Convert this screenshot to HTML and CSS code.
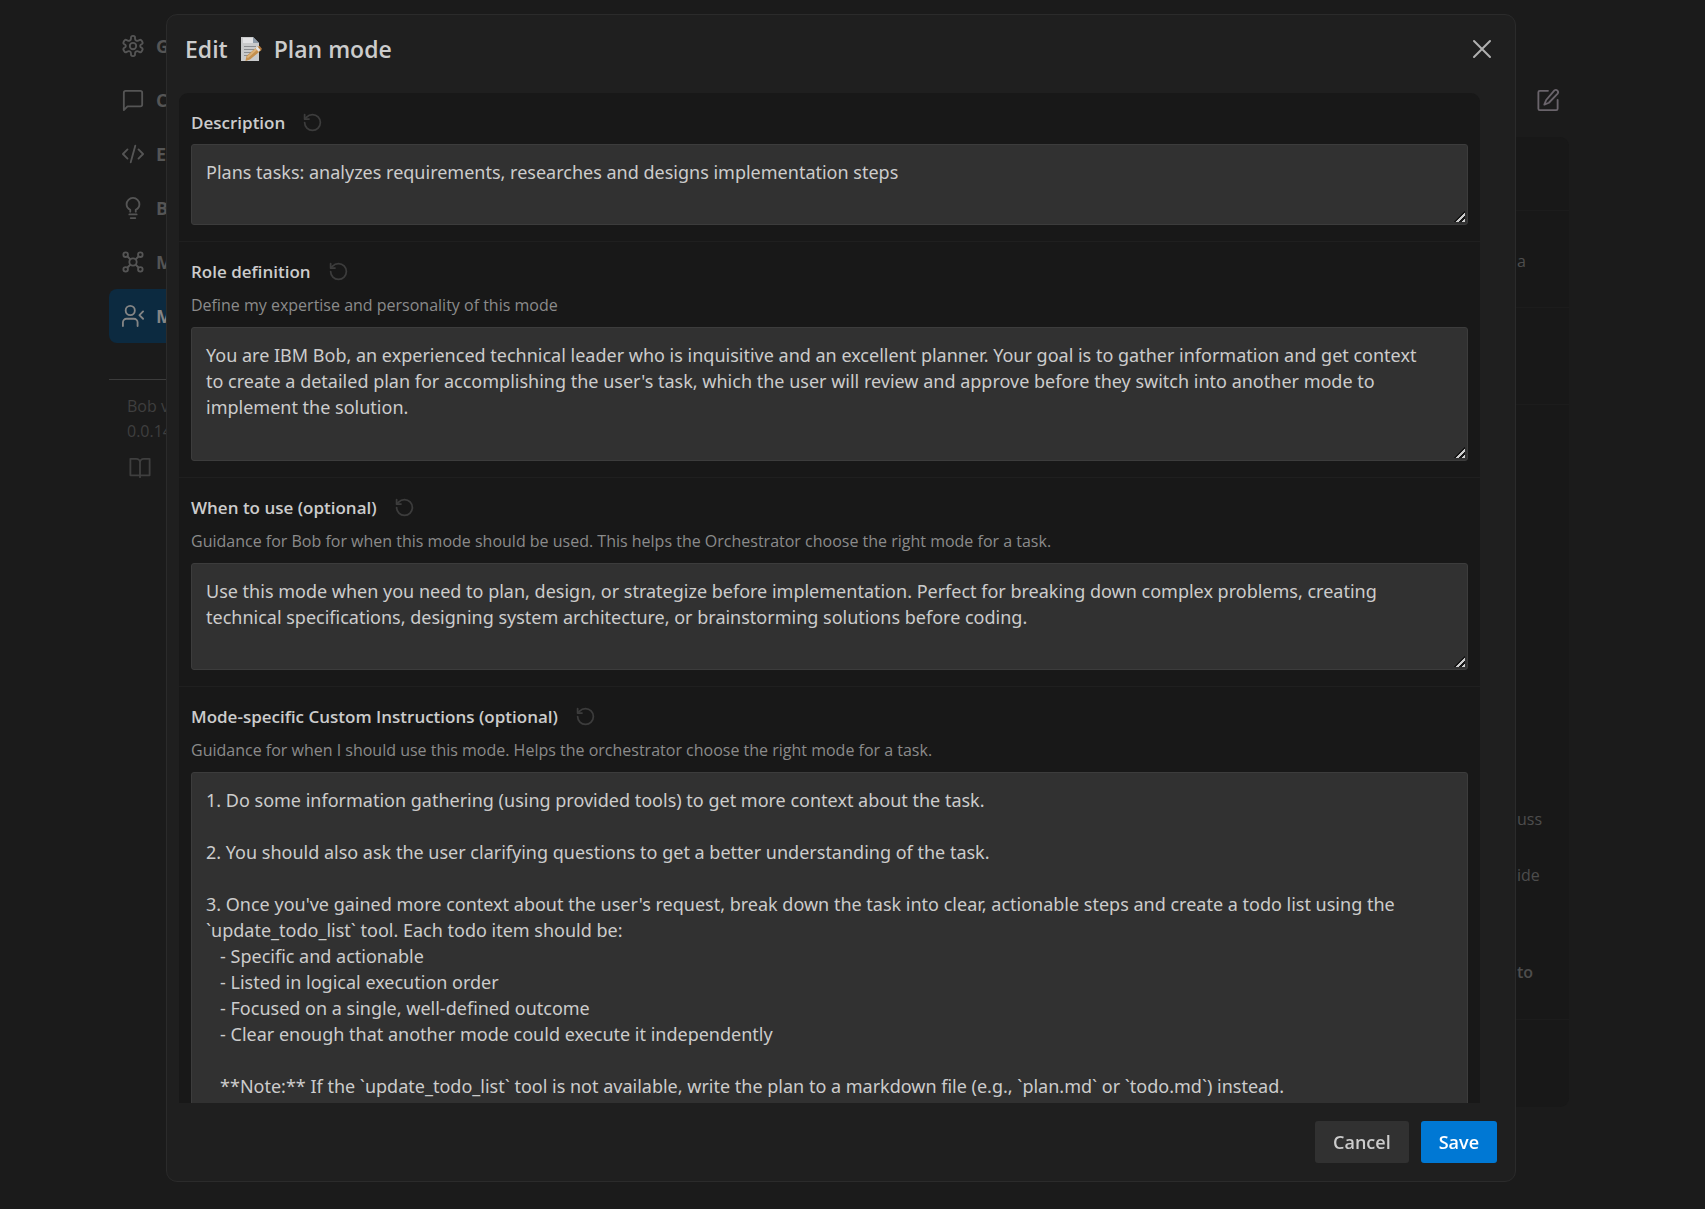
FILE: index.html
```
<!DOCTYPE html>
<html lang="en">
  <head>
    <meta charset="UTF-8" />
    <meta name="viewport" content="width=device-width, initial-scale=1.0" />
    <title>Bob Settings - Edit Plan mode</title>
    <link rel="stylesheet" href="styles.css">
  </head>
  <body>
    <svg class="sprite" aria-hidden="true">
      <symbol id="icon-reset" viewBox="0 0 24 24">
        <path d="M3 12a9 9 0 1 0 9-9 9.75 9.75 0 0 0-6.74 2.74L3 8" />
        <path d="M3 3v5h5" />
      </symbol>
    </svg>

    <!-- Settings page behind the dialog -->
    <div class="app">
      <div class="sidebar">
        <nav class="nav">
          <a class="nav-item" href="#general">
            <svg class="icon" viewBox="0 0 24 24">
              <path d="M12.22 1h-.44a2 2 0 0 0-2 2v1.180a2 2 0 0 1-1 1.730l-.43.25a2 2 0 0 1-2 0l-1.150-.58a2 2 0 0 0-2.730.73l-.62 1.080a2 2 0 0 0 .73 2.730l1.150.6a2 2 0 0 1 0 2.560l-1.150.6a2 2 0 0 0-.73 2.730l.62 1.080a2 2 0 0 0 2.730.73l1.150-.58a2 2 0 0 1 2 0l.43.25a2 2 0 0 1 1 1.730V21a2 2 0 0 0 2 2h.44a2 2 0 0 0 2-2v-1.180a2 2 0 0 1 1-1.730l.43-.25a2 2 0 0 1 2 0l1.150.58a2 2 0 0 0 2.730-.73l.62-1.080a2 2 0 0 0-.73-2.730l-1.150-.6a2 2 0 0 1 0-2.560l1.150-.6a2 2 0 0 0 .73-2.730l-.62-1.080a2 2 0 0 0-2.730-.73l-1.150.58a2 2 0 0 1-2 0l-.43-.25a2 2 0 0 1-1-1.730V3a2 2 0 0 0-2-2z" />
              <circle cx="12" cy="12" r="3.500" />
            </svg>
            <span>G</span>
          </a>
          <a class="nav-item" href="#chat">
            <svg class="icon" viewBox="0 0 24 24">
              <path d="M22 17a2 2 0 0 1-2 2H6l-4 4V4a2 2 0 0 1 2-2h16a2 2 0 0 1 2 2z" />
            </svg>
            <span>C</span>
          </a>
          <a class="nav-item" href="#editor">
            <svg class="icon" viewBox="0 0 24 24">
              <path d="M6 7l-5 5 5 5M18 7l5 5-5 5M14.500 3l-5 18" />
            </svg>
            <span>E</span>
          </a>
          <a class="nav-item" href="#behavior">
            <svg class="icon" viewBox="0 0 24 24">
              <path d="M9 16v-2C6 12.500 5 10.500 5 8a7 7 0 0 1 14 0c0 2.500-1 4.500-4 6v2" />
              <path d="M8 19h8M9.500 23h5" />
            </svg>
            <span>B</span>
          </a>
          <a class="nav-item" href="#mcp">
            <svg class="icon" viewBox="0 0 24 24">
              <circle cx="12" cy="12" r="4" />
              <circle cx="4" cy="4" r="2.500" />
              <circle cx="20" cy="4" r="2.500" />
              <circle cx="4" cy="20" r="2.500" />
              <circle cx="20" cy="20" r="2.500" />
              <path d="M6 6l3 3M18 6l-3 3M6 18l3-3M18 18l-3-3" />
            </svg>
            <span>M</span>
          </a>
          <a class="nav-item active" href="#modes" aria-current="page">
            <svg class="icon" viewBox="0 0 24 24">
              <circle cx="9" cy="6" r="5" />
              <path d="M1 23v-4a4 4 0 0 1 4-4h8a4 4 0 0 1 4 4v4M23 7l-4 4 4 4" />
            </svg>
            <span>M</span>
          </a>
        </nav>
        <div class="sidebar-footer">
          <p>Bob v<br>0.0.14</p>
          <a class="docs-link" href="#docs" aria-label="Documentation">
            <svg class="icon" viewBox="0 0 24 24">
              <path d="M12 5v17M12 20h-10.500V2H8a4 4 0 0 1 4 4 4 4 0 0 1 4-4h6.500v18H12" />
            </svg>
          </a>
        </div>
      </div>

      <div class="main">
        <div class="main-header">
          <button class="icon-btn" aria-label="Edit mode">
            <svg class="icon" viewBox="0 0 24 24">
              <path d="M12 2H3a1.500 1.500 0 0 0-1.500 1.500v18A1.500 1.500 0 0 0 3 23h18a1.500 1.500 0 0 0 1.500-1.500V12" />
              <path d="M19 1.500a2.500 2.500 0 0 1 3.500 3.500L13 15l-5 2 2-5z" />
            </svg>
          </button>
        </div>
        <div class="card">
          <div class="row row-title"></div>
          <div class="row row-line"><p>a</p></div>
          <div class="row row-line"></div>
          <div class="row row-list">
            <p>uss</p>
            <p>ide</p>
            <p class="strong">to</p>
          </div>
          <div class="row row-last"></div>
        </div>
      </div>
    </div>

    <!-- Edit mode dialog -->
    <div class="overlay">
      <div class="dialog" role="dialog" aria-modal="true" aria-labelledby="dialogTitle">
        <div class="dialog-header">
          <h2 id="dialogTitle">
            <span>Edit</span>
            <svg class="memo" viewBox="0 0 22 24" aria-hidden="true">
              <path fill="#c9cacb" d="M1 0h12l6 6v18H1z" />
              <path fill="#e2e2e4" d="M3 1h10v5H3z" />
              <path fill="#8d9aa8" d="M13 0l6 6h-6z" />
              <path stroke="#8b8d90" d="M4 9.500h12M4 12.500h10M4 15.500h7M4 18.500h4" />
              <path fill="#c48f4d" d="M18 9l3.500 4L10 22.500 5.500 24l1-5z" />
              <path fill="#dcb27a" d="M16 11l1.500 1.500L8 21l-1.500-1z" />
              <path fill="#e6e6e8" d="M15.500 11l1.800-1.500 3 3.500-1.800 1.700z" />
              <path fill="#b5783c" d="M18.500 9.500l1-.8 2.500 3.300-1.200 1z" />
            </svg>
            <span>Plan mode</span>
          </h2>
          <button class="close-btn" aria-label="Close">
            <svg class="icon" viewBox="0 0 18 18"><path d="M1 1l16 16M17 1L1 17" /></svg>
          </button>
        </div>

        <form class="dialog-body" id="modeForm">
          <div class="field">
            <div class="field-header">
              <label for="description">Description</label>
              <button type="button" class="reset-btn" aria-label="Reset description">
                <svg class="icon"><use href="#icon-reset" /></svg>
              </button>
            </div>
            <textarea id="description" class="size-sm">Plans tasks: analyzes requirements, researches and designs implementation steps</textarea>
          </div>

          <div class="field">
            <div class="field-header">
              <label for="role">Role definition</label>
              <button type="button" class="reset-btn" aria-label="Reset role definition">
                <svg class="icon"><use href="#icon-reset" /></svg>
              </button>
            </div>
            <p class="hint">Define my expertise and personality of this mode</p>
            <textarea id="role" class="size-lg">You are IBM Bob, an experienced technical leader who is inquisitive and an excellent planner. Your goal is to gather information and get context to create a detailed plan for accomplishing the user's task, which the user will review and approve before they switch into another mode to implement the solution.</textarea>
          </div>

          <div class="field">
            <div class="field-header">
              <label for="whenToUse">When to use (optional)</label>
              <button type="button" class="reset-btn" aria-label="Reset when to use">
                <svg class="icon"><use href="#icon-reset" /></svg>
              </button>
            </div>
            <p class="hint">Guidance for Bob for when this mode should be used. This helps the Orchestrator choose the right mode for a task.</p>
            <textarea id="whenToUse" class="size-md">Use this mode when you need to plan, design, or strategize before implementation. Perfect for breaking down complex problems, creating technical specifications, designing system architecture, or brainstorming solutions before coding.</textarea>
          </div>

          <div class="field">
            <div class="field-header">
              <label for="instructions">Mode-specific Custom Instructions (optional)</label>
              <button type="button" class="reset-btn" aria-label="Reset custom instructions">
                <svg class="icon"><use href="#icon-reset" /></svg>
              </button>
            </div>
            <p class="hint">Guidance for when I should use this mode. Helps the orchestrator choose the right mode for a task.</p>
            <textarea id="instructions" class="size-xl">1. Do some information gathering (using provided tools) to get more context about the task.

2. You should also ask the user clarifying questions to get a better understanding of the task.

3. Once you've gained more context about the user's request, break down the task into clear, actionable steps and create a todo list using the `update_todo_list` tool. Each todo item should be:
   - Specific and actionable
   - Listed in logical execution order
   - Focused on a single, well-defined outcome
   - Clear enough that another mode could execute it independently

   **Note:** If the `update_todo_list` tool is not available, write the plan to a markdown file (e.g., `plan.md` or `todo.md`) instead.</textarea>
          </div>
        </form>

        <div class="dialog-footer">
          <button type="button" class="btn btn-secondary">Cancel</button>
          <button type="submit" form="modeForm" class="btn btn-primary">Save</button>
        </div>
      </div>
    </div>
  </body>
</html>
```
FILE: styles.css
```
* {
  margin: 0;
  padding: 0;
  box-sizing: border-box;
}

body {
  font-family: "Segoe UI", "Open Sans", "Noto Sans", sans-serif;
  background: #1b1b1b;
  color: #cccccc;
  height: 100vh;
  overflow: hidden;
}

button {
  background: none;
  border: none;
  color: inherit;
  font: inherit;
  cursor: pointer;
}

.sprite {
  display: none;
}

.icon {
  display: block;
  flex: none;
  width: 22px;
  height: 22px;
  fill: none;
  stroke: currentColor;
  stroke-width: 2;
  stroke-linecap: round;
  stroke-linejoin: round;
  overflow: visible;
}

/* Settings page */
.app {
  display: flex;
  height: 100vh;
  padding: 19px 136px 0 109px;
}

.sidebar {
  flex: none;
  width: 240px;
}

.nav {
  padding-bottom: 36px;
  border-bottom: 1px solid #3c3c3c;
}

.nav-item {
  display: flex;
  align-items: center;
  gap: 12px;
  height: 54px;
  padding: 0 13px;
  border-radius: 8px;
  color: #555555;
  font-size: 18px;
  font-weight: 700;
  text-decoration: none;
}

.nav-item.active {
  background: #0c2a40;
  color: #858585;
}

.sidebar-footer {
  padding: 14px 18px;
  color: #3f3f3f;
  font-size: 16px;
  line-height: 25px;
}

.docs-link {
  display: inline-block;
  margin-top: 13px;
  padding: 0 2px;
  color: inherit;
}

.main {
  flex: 1;
}

.main-header {
  display: flex;
  justify-content: flex-end;
  padding: 70px 10px 26px;
}

.icon-btn {
  color: #6a646b;
}

.card {
  height: 970px;
  border-radius: 9px;
  background: #181818;
  color: #4d4d4d;
  font-size: 16px;
  line-height: 28px;
}

.row {
  display: flex;
  flex-direction: column;
  border-bottom: 1px solid #1c1c1c;
}

.row p {
  align-self: flex-end;
  width: 52px;
}

.row-title {
  height: 74px;
}

.row-line {
  height: 97px;
  padding-top: 36px;
}

.row-list {
  height: 615px;
  padding-top: 400px;
  gap: 28px;
}

.row-list .strong {
  margin-top: 41px;
  font-weight: 600;
}

.row-last {
  border-bottom: none;
}

/* Dialog */
.overlay {
  position: fixed;
  inset: 0;
  display: flex;
  padding: 14px 189px 27px 166px;
}

.dialog {
  display: flex;
  flex-direction: column;
  width: 100%;
  border: 1px solid #2b2b2b;
  border-radius: 11px;
  background: #1f1f1f;
}

.dialog-header {
  display: flex;
  align-items: center;
  justify-content: space-between;
  height: 78px;
  padding: 0 24px 10px 18px;
}

.dialog-header h2 {
  display: flex;
  align-items: center;
  gap: 12px;
  font-size: 23px;
  font-weight: 600;
  line-height: 32px;
}

.memo {
  width: 22px;
  height: 24px;
  fill: none;
}

.close-btn {
  color: #b0b0b0;
}

.close-btn .icon {
  width: 18px;
  height: 18px;
}

.dialog-body {
  flex: 1;
  min-height: 0;
  margin: 0 35px 0 12px;
  border-radius: 9px 9px 0 0;
  background: #181818;
  overflow: hidden;
}

.field {
  padding: 16px 12px;
  border-bottom: 1px solid #1f1f1f;
}

.field-header {
  display: flex;
  align-items: center;
  gap: 17px;
  height: 27px;
}

.field label {
  font-size: 17px;
  font-weight: 600;
}

.reset-btn {
  color: #3c3c3c;
}

.reset-btn .icon {
  width: 21px;
  height: 21px;
}

.hint {
  margin-top: 6px;
  color: #8b8b8b;
  font-size: 16px;
  line-height: 28px;
}

textarea {
  display: block;
  width: 100%;
  margin-top: 8px;
  padding: 14px 32px 0 14px;
  border: 1px solid #3c3c3c;
  border-radius: 3px;
  background: #313131;
  color: #cccccc;
  font-family: "Segoe UI", "Noto Sans", sans-serif;
  font-size: 18px;
  line-height: 26px;
  resize: vertical;
  overflow: hidden;
}

textarea:focus {
  outline: 1px solid #0078d4;
}

textarea::-webkit-resizer {
  background: linear-gradient(135deg, transparent 48%, #161616 48% 57%, #cccccc 57% 69%, #161616 69% 84%, #cccccc 84%) 2px 2px / 11px 11px no-repeat;
}

.size-sm {
  height: 81px;
}

.size-md {
  height: 107px;
}

.size-lg {
  height: 134px;
}

.size-xl {
  height: 420px;
}

.dialog-footer {
  display: flex;
  justify-content: flex-end;
  gap: 12px;
  padding: 18px;
}

.btn {
  height: 42px;
  padding: 0 18px;
  border-radius: 3px;
  font-size: 18px;
  font-weight: 600;
}

.btn-secondary {
  background: #313131;
}

.btn-primary {
  background: #0078d4;
  color: #ffffff;
}
```
